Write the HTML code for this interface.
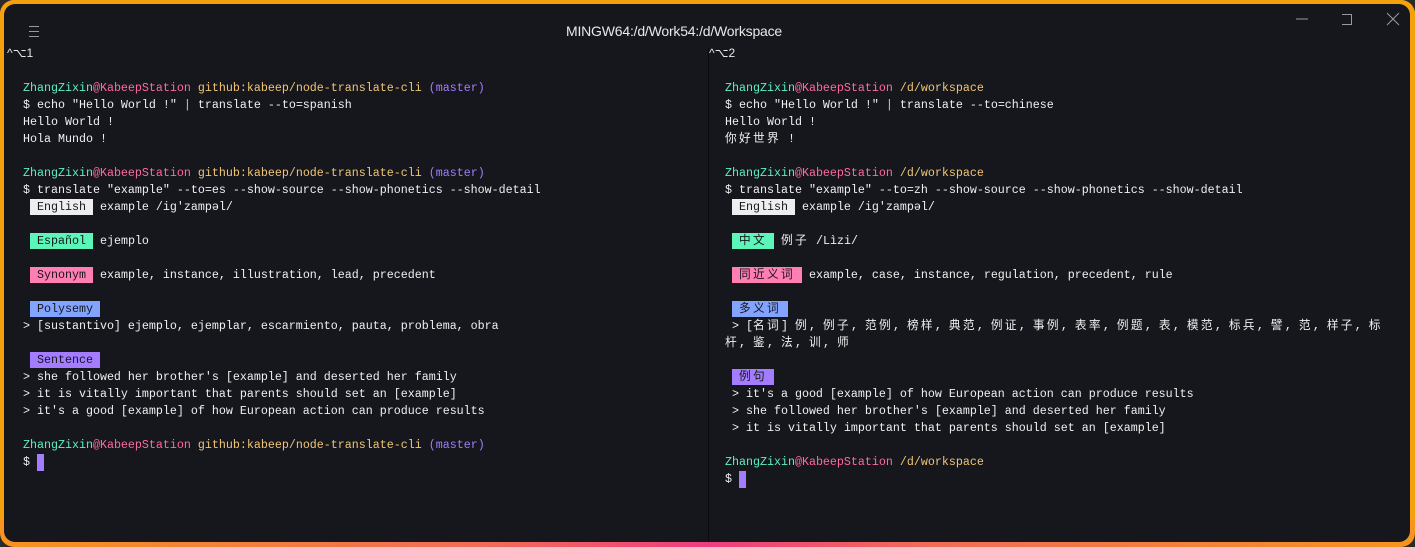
<!DOCTYPE html>
<html><head><meta charset="utf-8"><style>
html,body{margin:0;padding:0;width:1415px;height:547px;overflow:hidden;background:#2a2a2a}
.frame{position:absolute;left:0;top:0;width:1415px;height:547px;border-radius:14px;background:linear-gradient(90deg,#f7931e 0%,#f06a5a 35%,#ef3d7e 50%,#f06a5a 65%,#f7931e 100%)}
.frame2{position:absolute;left:0;top:0;width:1415px;height:520px;border-radius:14px 14px 0 0;background:#f5a10e}
.win{position:absolute;left:4px;top:4px;width:1406px;height:538px;background:#16161d;border-radius:11px}
.title{position:absolute;left:566px;top:23px;color:#e8e8e8;font:14px "Liberation Sans",sans-serif;letter-spacing:-0.2px;white-space:nowrap}
.ham{position:absolute;left:29px;top:26px;width:10px}
.ham i{display:block;height:1px;background:#9a9a9a;margin-bottom:4px}
.ctl{position:absolute;top:12px;color:#9a9a9a}
.tab{position:absolute;top:46px;color:#e8e8e8;font:12px "Liberation Sans","DejaVu Sans",sans-serif}
.div{position:absolute;left:708px;top:47px;width:1px;height:495px;background:#0c0c10}
pre{position:absolute;margin:0;top:80px;font:11.67px/17px "Liberation Mono","Noto Sans CJK SC",monospace;color:#f0f0f0}
.g{color:#5cf0c0}.p{color:#ff6a9c}.y{color:#f0c674}.v{color:#a37cff}
.t{color:#16161d;padding:1px 0}
.tw{background:#eeeeee}.tg{background:#5cf6b8}.tp{background:#ff7eb4}.tb{background:#82a4ff}.tv{background:#a47cff}
.c{letter-spacing:2.33px}
.cur{display:inline-block;width:7px;height:17px;background:#a47cff;vertical-align:top}
</style></head><body>
<div class="frame"></div><div class="frame2"></div>
<div class="win"></div>
<div class="ham"><i></i><i></i><i></i></div>
<div class="title">MINGW64:/d/Work54:/d/Workspace</div>
<svg class="ctl" style="left:1295px" width="14" height="14"><line x1="1" y1="7" x2="13" y2="7" stroke="#9a9a9a"/></svg>
<svg class="ctl" style="left:1340px" width="14" height="14"><path d="M2 2.5H11.5V12.5H2" fill="none" stroke="#9a9a9a"/></svg>
<svg class="ctl" style="left:1386px" width="14" height="14"><path d="M1 1L13 13M13 1L1 13" stroke="#9a9a9a"/></svg>
<div class="tab" style="left:7px">^⌥1</div>
<div class="tab" style="left:709px">^⌥2</div>
<div class="div"></div>
<pre style="left:23px"><span class="g">ZhangZixin</span><span class="p">@KabeepStation</span> <span class="y">github:kabeep/node-translate-cli</span> <span class="v">(master)</span>
$ echo "Hello World !" <span class="y">|</span> translate --to=spanish
Hello World !
Hola Mundo !

<span class="g">ZhangZixin</span><span class="p">@KabeepStation</span> <span class="y">github:kabeep/node-translate-cli</span> <span class="v">(master)</span>
$ translate "example" --to=es --show-source --show-phonetics --show-detail
 <span class="t tw"> English </span> example /ig'zampəl/

 <span class="t tg"> Español </span> ejemplo

 <span class="t tp"> Synonym </span> example, instance, illustration, lead, precedent

 <span class="t tb"> Polysemy </span>
> [sustantivo] ejemplo, ejemplar, escarmiento, pauta, problema, obra

 <span class="t tv"> Sentence </span>
> she followed her brother's [example] and deserted her family
> it is vitally important that parents should set an [example]
> it's a good [example] of how European action can produce results

<span class="g">ZhangZixin</span><span class="p">@KabeepStation</span> <span class="y">github:kabeep/node-translate-cli</span> <span class="v">(master)</span>
$ <span class="cur"></span></pre>
<pre style="left:725px"><span class="g">ZhangZixin</span><span class="p">@KabeepStation</span> <span class="y">/d/workspace</span>
$ echo "Hello World !" <span class="y">|</span> translate --to=chinese
Hello World !
<span class="c">你好世界</span> !

<span class="g">ZhangZixin</span><span class="p">@KabeepStation</span> <span class="y">/d/workspace</span>
$ translate "example" --to=zh --show-source --show-phonetics --show-detail
 <span class="t tw"> English </span> example /ig'zampəl/

 <span class="t tg"> <span class="c">中文</span> </span> <span class="c">例子</span> /Lìzi/

 <span class="t tp"> <span class="c">同近义词</span> </span> example, case, instance, regulation, precedent, rule

 <span class="t tb"> <span class="c">多义词</span> </span>
 > [<span class="c">名词</span>] <span class="c">例</span>, <span class="c">例子</span>, <span class="c">范例</span>, <span class="c">榜样</span>, <span class="c">典范</span>, <span class="c">例证</span>, <span class="c">事例</span>, <span class="c">表率</span>, <span class="c">例题</span>, <span class="c">表</span>, <span class="c">模范</span>, <span class="c">标兵</span>, <span class="c">譬</span>, <span class="c">范</span>, <span class="c">样子</span>, <span class="c">标</span>
<span class="c">杆</span>, <span class="c">鉴</span>, <span class="c">法</span>, <span class="c">训</span>, <span class="c">师</span>

 <span class="t tv"> <span class="c">例句</span> </span>
 > it's a good [example] of how European action can produce results
 > she followed her brother's [example] and deserted her family
 > it is vitally important that parents should set an [example]

<span class="g">ZhangZixin</span><span class="p">@KabeepStation</span> <span class="y">/d/workspace</span>
$ <span class="cur"></span></pre>
</body></html>
